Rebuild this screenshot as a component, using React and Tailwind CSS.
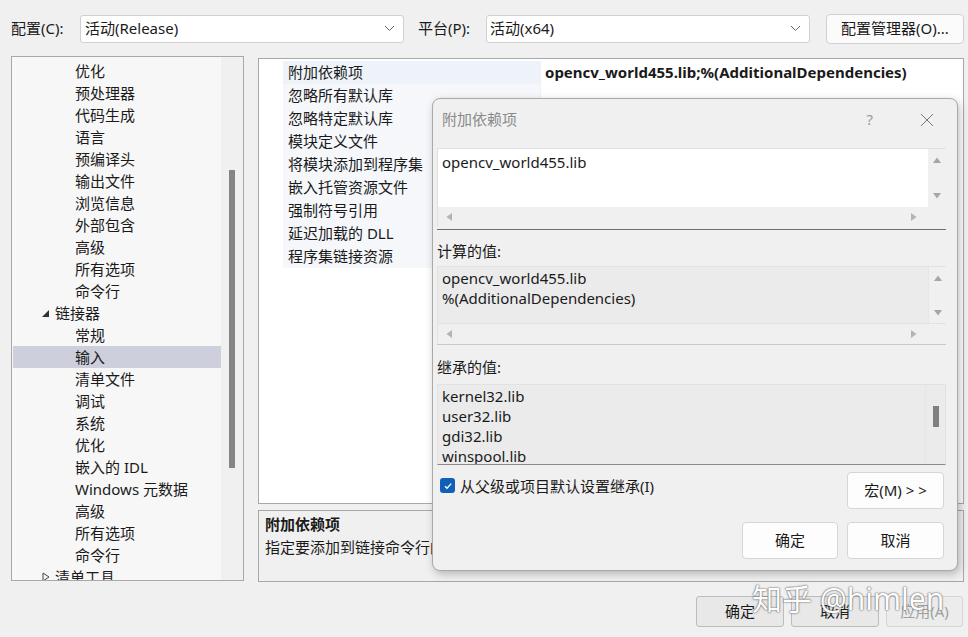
import React from "react";

const Up = () => (
  <svg width="10" height="8" viewBox="0 0 10 8"><path d="M1 7 L5 1.5 L9 7 Z" fill="#a6a6a6" /></svg>
);
const Down = () => (
  <svg width="10" height="8" viewBox="0 0 10 8"><path d="M1 1 L5 6.5 L9 1 Z" fill="#a6a6a6" /></svg>
);
const Left = () => (
  <svg width="8" height="10" viewBox="0 0 8 10"><path d="M7 1 L1.5 5 L7 9 Z" fill="#b4b4b4" /></svg>
);
const Right = () => (
  <svg width="8" height="10" viewBox="0 0 8 10"><path d="M1 1 L6.5 5 L1 9 Z" fill="#b4b4b4" /></svg>
);

const Chevron = () => (
  <svg width="11" height="7" viewBox="0 0 11 7"><polyline points="1,1 5.5,5.5 10,1" fill="none" stroke="#666" strokeWidth="1" /></svg>
);

const treeItems = [
  { t: "优化", lv: 2 },
  { t: "预处理器", lv: 2 },
  { t: "代码生成", lv: 2 },
  { t: "语言", lv: 2 },
  { t: "预编译头", lv: 2 },
  { t: "输出文件", lv: 2 },
  { t: "浏览信息", lv: 2 },
  { t: "外部包含", lv: 2 },
  { t: "高级", lv: 2 },
  { t: "所有选项", lv: 2 },
  { t: "命令行", lv: 2 },
  { t: "链接器", lv: 1, open: true },
  { t: "常规", lv: 2 },
  { t: "输入", lv: 2, sel: true },
  { t: "清单文件", lv: 2 },
  { t: "调试", lv: 2 },
  { t: "系统", lv: 2 },
  { t: "优化", lv: 2 },
  { t: "嵌入的 IDL", lv: 2 },
  { t: "Windows 元数据", lv: 2 },
  { t: "高级", lv: 2 },
  { t: "所有选项", lv: 2 },
  { t: "命令行", lv: 2 },
  { t: "清单工具", lv: 1, open: false },
];

const props = [
  "附加依赖项",
  "忽略所有默认库",
  "忽略特定默认库",
  "模块定义文件",
  "将模块添加到程序集",
  "嵌入托管资源文件",
  "强制符号引用",
  "延迟加载的 DLL",
  "程序集链接资源",
];

function TreeRow({ item }) {
  return (
    <div
      className={
        "h-[22px] flex items-center shrink-0 " +
        (item.sel ? "bg-[#cdd0dc]" : "")
      }
    >
      {item.lv === 1 ? (
        <div className="flex items-center pl-[25px]">
          <div className="w-[15px] flex justify-center">
            {item.open ? (
              <svg width="9" height="9" viewBox="0 0 9 9"><path d="M8 1 L8 8 L1 8 Z" fill="#333" /></svg>
            ) : (
              <svg width="8" height="10" viewBox="0 0 8 10"><path d="M1 1 L7 5 L1 9 Z" fill="none" stroke="#444" strokeWidth="1" /></svg>
            )}
          </div>
          <span className="pl-[2px]">{item.t}</span>
        </div>
      ) : (
        <span className="pl-[62px]">{item.t}</span>
      )}
    </div>
  );
}

export default function App() {
  return (
    <div className="w-[968px] h-[637px] bg-[#f0f0f0] relative overflow-hidden font-['Noto_Sans','Noto_Sans_CJK_SC',sans-serif] text-[15px] text-[#1a1a1a]">
      {/* top row */}
      <div className="flex items-center h-[56px] pl-[11px] pt-[1px]">
        <span className="w-[69px]">配置(C):</span>
        <div className="w-[324px] h-[28px] bg-white border border-[#d0d0d0] rounded-[3px] flex items-center justify-between pl-[4px] pr-[8px]">
          <span>活动(Release)</span>
          <Chevron />
        </div>
        <span className="ml-[14px] w-[68px]">平台(P):</span>
        <div className="w-[324px] h-[28px] bg-white border border-[#d0d0d0] rounded-[3px] flex items-center justify-between pl-[3px] pr-[8px]">
          <span>活动(x64)</span>
          <Chevron />
        </div>
        <div className="ml-[16px] w-[138px] h-[30px] bg-[#fbfbfb] border border-[#d0d0d0] rounded-[4px] flex items-center justify-center">
          配置管理器(O)...
        </div>
      </div>

      {/* body */}
      <div className="flex items-start pl-[11px]">
        {/* tree */}
        <div className="w-[233px] h-[525px] border border-[#a8a8a8] bg-[#f7f7f7] flex overflow-hidden">
          <div className="w-[209px] flex flex-col pt-[3px] pl-[1px] leading-[22px]">
            {treeItems.map((it, i) => (
              <TreeRow key={i} item={it} />
            ))}
          </div>
          <div className="flex-1 bg-[#f0f0f0] flex justify-center">
            <div className="mt-[113px] w-[6px] h-[298px] bg-[#858585]" />
          </div>
        </div>

        {/* right column */}
        <div className="ml-[14px] mt-[2px] w-[706px] flex flex-col">
          <div className="h-[446px] border border-[#a8a8a8] bg-white flex flex-col pt-[2px]">
            {props.map((p, i) => (
              <div key={i} className="flex h-[23px]">
                <div className="w-[24px] bg-white" />
                <div
                  className={
                    "w-[257px] flex items-center pl-[5px] " +
                    (i === 0 ? "bg-[#eef3f9]" : "bg-[#f5f7fa]")
                  }
                >
                  {p}
                </div>
                <div className="flex-1 flex items-center pl-[4px] border-l border-[#f0f0f0] bg-white font-bold">
                  {i === 0 ? "opencv_world455.lib;%(AdditionalDependencies)" : ""}
                </div>
              </div>
            ))}
          </div>
          <div className="mt-[6px] h-[72px] border border-[#a8a8a8] bg-[#f0f0f0] pl-[6px] pt-[2px] leading-[23px]">
            <div className="font-bold">附加依赖项</div>
            <div>指定要添加到链接命令行的其他项</div>
          </div>
        </div>
      </div>

      {/* bottom buttons */}
      <div className="flex justify-end gap-[7px] pr-[5px] mt-[14px]">
        <div className="w-[88px] h-[31px] border border-[#bcbcbc] rounded-[3px] bg-[#e8e8e8] flex items-center justify-center">确定</div>
        <div className="w-[88px] h-[31px] border border-[#bcbcbc] rounded-[3px] bg-[#e8e8e8] flex items-center justify-center">取消</div>
        <div className="w-[77px] h-[31px] border border-[#d4d4d4] rounded-[3px] bg-[#ececec] flex items-center justify-center text-[#a0a0a0]">应用(A)</div>
      </div>

      {/* watermark */}
      <div className="absolute left-[752px] top-[580px] text-[30px] leading-[38px] text-white [text-shadow:0_0_2px_#555,0_0_1px_#555] opacity-95">
        知乎 @himlen
      </div>

      {/* dialog */}
      <div className="absolute left-[432px] top-[98px] w-[526px] h-[473px] bg-[#f0f0f0] border border-[#a9a9a9] rounded-[8px] shadow-[2px_3px_8px_rgba(0,0,0,0.25)] flex flex-col pl-[4px] pr-[11px]">
        <div className="h-[41px] flex items-center pl-[5px] text-[#8a8a8a] shrink-0">
          <span className="flex-1">附加依赖项</span>
          <span className="mr-[47px] text-[#999]">?</span>
          <svg width="14" height="14" viewBox="0 0 14 14" className="mr-[12px]"><path d="M1 1 L13 13 M13 1 L1 13" stroke="#777" strokeWidth="1" /></svg>
        </div>

        {/* edit box */}
        <div className="mt-[8px] flex flex-col">
          <div className="flex h-[59px] border-t border-l border-[#e0e0e0]">
            <div className="flex-1 bg-white pl-[4px] pt-[1px] leading-[24px]">opencv_world455.lib</div>
            <div className="w-[18px] flex flex-col items-center">
              <div className="mt-[7px]"><Up /></div>
              <div className="flex-1" />
              <div className="mb-[7px]"><Down /></div>
            </div>
          </div>
          <div className="h-[20px] flex items-center justify-between pl-[7px] pr-[28px] border-l border-[#e0e0e0]">
            <Left />
            <Right />
          </div>
          <div className="h-[1px] bg-[#6e6e6e] mt-[2px]" />
        </div>

        <div className="mt-[10px] leading-[22px]">计算的值:</div>
        <div className="mt-[4px] flex flex-col">
          <div className="flex h-[57px] border-t border-l border-[#e2e2e2]">
            <div className="flex-1 bg-[#ebebeb] pl-[4px] leading-[20px] pt-[1px]">
              <div>opencv_world455.lib</div>
              <div>%(AdditionalDependencies)</div>
            </div>
            <div className="w-[18px] flex flex-col items-center border-l border-[#e6e6e6]">
              <div className="mt-[7px]"><Up /></div>
              <div className="flex-1" />
              <div className="mb-[6px]"><Down /></div>
            </div>
          </div>
          <div className="h-[20px] flex items-center justify-between pl-[7px] pr-[28px] border-l border-t border-[#e2e2e2]">
            <Left />
            <Right />
          </div>
          <div className="h-[1px] bg-[#c8c8c8] mt-[1px]" />
        </div>

        <div className="mt-[11px] leading-[22px]">继承的值:</div>
        <div className="mt-[6px] flex h-[81px] border border-[#e2e2e2] border-b-[#8a8a8a] bg-[#ebebeb]">
          <div className="flex-1 pl-[4px] leading-[20px] pt-[1px] overflow-hidden">
            <div>kernel32.lib</div>
            <div>user32.lib</div>
            <div>gdi32.lib</div>
            <div>winspool.lib</div>
          </div>
          <div className="w-[20px] border-l border-[#e6e6e6] flex justify-center">
            <div className="mt-[21px] w-[6px] h-[21px] bg-[#7f7f7f]" />
          </div>
        </div>

        <div className="flex mt-[7px]">
          <div className="flex-1 flex items-start pt-[6px] pl-[3px]">
            <div className="w-[15px] h-[15px] rounded-[3px] bg-[#1160b8] flex items-center justify-center">
              <svg width="10" height="10" viewBox="0 0 10 10"><polyline points="2,5.2 4,7.2 8.2,2.6" fill="none" stroke="white" strokeWidth="1.3" /></svg>
            </div>
            <span className="ml-[5px] leading-[16px]">从父级或项目默认设置继承(I)</span>
          </div>
          <div className="flex flex-col gap-[13px] mr-[2px]">
            <div className="w-[97px] h-[37px] bg-[#fdfdfd] border border-[#d6d6d6] rounded-[4px] flex items-center justify-center">宏(M) &gt; &gt;</div>
            <div className="flex gap-[9px] -ml-[105px]">
              <div className="w-[96px] h-[37px] bg-[#fdfdfd] border border-[#d6d6d6] rounded-[4px] flex items-center justify-center">确定</div>
              <div className="w-[97px] h-[37px] bg-[#fdfdfd] border border-[#d6d6d6] rounded-[4px] flex items-center justify-center">取消</div>
            </div>
          </div>
        </div>
      </div>
    </div>
  );
}
